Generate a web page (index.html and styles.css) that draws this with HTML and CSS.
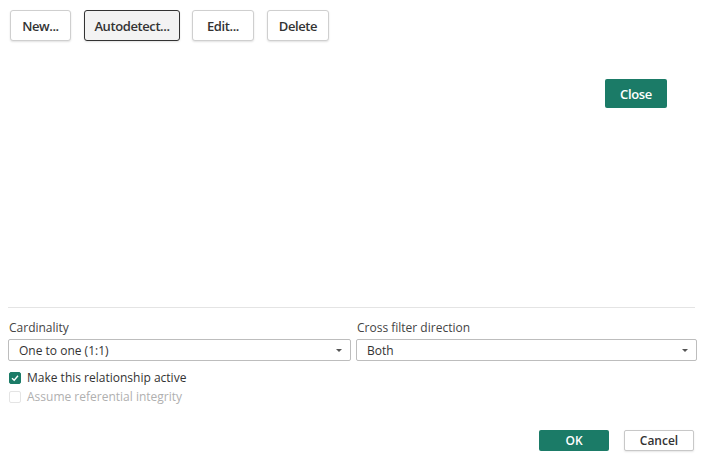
FILE: index.html
```html
<!DOCTYPE html>
<html>
    <head>
        <title>Manage relationships</title>
        <meta charset="UTF-8" />
        <meta name="viewport" content="width=device-width, initial-scale=1.0" />
        <link rel="stylesheet" href="styles.css">
    </head>
    <body>
        <div class="toolbar">
            <button class="btn btn-new">New...</button>
            <button class="btn btn-auto">Autodetect...</button>
            <button class="btn btn-edit">Edit...</button>
            <button class="btn btn-delete">Delete</button>
        </div>

        <div class="close-row">
            <button class="btn-close">Close</button>
        </div>

        <div class="separator"></div>

        <div class="fields">
            <div class="field field-left">
                <div class="label">Cardinality</div>
                <div class="select">
                    <span>One to one (1:1)</span>
                    <span class="caret"></span>
                </div>
            </div>
            <div class="field field-right">
                <div class="label">Cross filter direction</div>
                <div class="select">
                    <span>Both</span>
                    <span class="caret"></span>
                </div>
            </div>
        </div>

        <div class="check-row">
            <span class="box checked">
                <svg width="8" height="8" viewBox="0 0 8 8"><path d="M1 4.2 L3.2 6.2 L7 1.8" fill="none" stroke="#fff" stroke-width="1.4"/></svg>
            </span>
            <span>Make this relationship active</span>
        </div>
        <div class="check-row disabled">
            <span class="box"></span>
            <span>Assume referential integrity</span>
        </div>

        <div class="footer">
            <button class="btn-ok">OK</button>
            <button class="btn-cancel">Cancel</button>
        </div>
    </body>
</html>
```

FILE: styles.css
```css
body {
    margin: 0;
    width: 709px;
    height: 469px;
    background: #ffffff;
    font-family: "Open Sans", "Noto Sans", sans-serif;
    color: #333333;
    overflow: hidden;
}

button {
    font-family: inherit;
    cursor: pointer;
}

.toolbar {
    display: flex;
    padding: 10px 0 0 10px;
}

.btn {
    height: 31px;
    background: #ffffff;
    border: 1px solid #cfcfcf;
    border-radius: 3px;
    box-shadow: 0 1px 2px rgba(0, 0, 0, 0.12);
    font-size: 13px;
    font-weight: 600;
    letter-spacing: -0.4px;
    color: #333333;
    padding: 0;
}
.btn-new { width: 61px; margin-right: 13px; }
.btn-auto {
    width: 96px;
    margin-right: 12px;
    background: #f3f3f3;
    border-color: #333333;
}
.btn-edit { width: 62px; margin-right: 13px; }
.btn-delete { width: 62px; }

.close-row {
    display: flex;
    justify-content: flex-end;
    padding-right: 42px;
    margin-top: 38px;
}

.btn-close {
    width: 62px;
    height: 29px;
    background: #1b7b67;
    border: none;
    border-radius: 2px;
    color: #ffffff;
    font-size: 13px;
    font-weight: 600;
    letter-spacing: -0.3px;
    padding: 0;
}

.separator {
    margin: 199px 14px 0 8px;
    border-top: 1px solid #e4e4e4;
}

.fields {
    display: flex;
    gap: 5px;
    padding: 0 12px 0 8px;
    margin-top: 12px;
}

.field-left { width: 343px; }
.field-right { flex: 1; }

.label {
    font-size: 12px;
    line-height: 15px;
    color: #444444;
    padding-left: 1px;
}

.select {
    margin-top: 4px;
    height: 20px;
    border: 1px solid #bdbdbd;
    border-radius: 2px;
    display: flex;
    align-items: center;
    justify-content: space-between;
    padding: 0 8px 0 10px;
    font-size: 12px;
    color: #333333;
}

.caret {
    width: 0;
    height: 0;
    border-left: 3px solid transparent;
    border-right: 3px solid transparent;
    border-top: 3px solid #555555;
}

.check-row {
    display: flex;
    align-items: center;
    gap: 6px;
    padding-left: 9px;
    font-size: 12px;
    line-height: 16px;
    color: #333333;
    margin-top: 9px;
}
.check-row.disabled {
    margin-top: 3px;
    color: #b0b0b0;
}

.box {
    width: 12px;
    height: 12px;
    box-sizing: border-box;
    border: 1px solid #e4e4e4;
    border-radius: 2px;
    display: flex;
    align-items: center;
    justify-content: center;
}
.box.checked {
    background: #1b7b67;
    border-color: #1b7b67;
}

.footer {
    display: flex;
    justify-content: flex-end;
    gap: 15px;
    padding-right: 15px;
    margin-top: 25px;
}

.btn-ok, .btn-cancel {
    width: 70px;
    height: 21px;
    border-radius: 2px;
    font-size: 12px;
    font-weight: 600;
    padding: 0;
}
.btn-ok {
    background: #1b7b67;
    border: none;
    color: #ffffff;
}
.btn-cancel {
    background: #ffffff;
    border: 1px solid #c8c8c8;
    color: #333333;
    box-shadow: 0 1px 2px rgba(0, 0, 0, 0.1);
}
```
